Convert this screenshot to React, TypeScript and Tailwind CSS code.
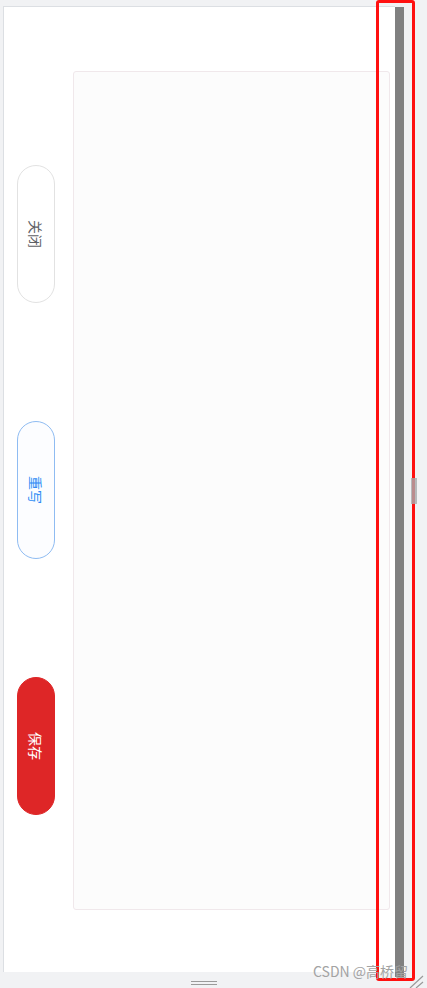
import React from "react";

const BUTTONS = [
  { label: "关闭", cls: "bg-white border border-[#e2e2e2] text-[#606266]" },
  { label: "重写", cls: "bg-[#fcfdff] border border-[#8fbcf2] text-[#2f8df5]" },
  { label: "保存", cls: "bg-[#de2627] border border-[#de2627] text-white" },
];

function SideButton({ label, cls }: { label: string; cls: string }) {
  return (
    <button
      className={
        "w-[38px] h-[138px] rounded-full flex items-center justify-center " + cls
      }
    >
      <span className="inline-block rotate-90 whitespace-nowrap text-[14px] leading-none">
        {label}
      </span>
    </button>
  );
}

export default function App() {
  return (
    <div className="relative w-[427px] h-[988px] bg-[#f1f2f4] overflow-hidden font-['Noto_Sans_CJK_SC','Noto_Sans',sans-serif]">
      <div className="flex pt-[6px] pl-[3px]">
        {/* dialog panel */}
        <div className="w-[392px] h-[966px] bg-white border-l border-t border-[#dcdfe3] flex pl-[13px]">
          <div className="w-[38px] flex flex-col gap-[118px] pt-[158px]">
            {BUTTONS.map((b) => (
              <SideButton key={b.label} {...b} />
            ))}
          </div>
          <div className="ml-[18px] mt-[64px] w-[317px] h-[839px] border border-[#f0e8eb] rounded-[3px] bg-[#fcfcfc]" />
        </div>
        {/* scroll bar */}
        <div className="w-[9px] h-[970px] mt-[1px] bg-[#808080]" />
      </div>

      {/* bottom drag handle */}
      <div className="absolute left-[191px] top-[981px] w-[26px] flex flex-col gap-[2px]">
        <div className="h-[1px] bg-[#9a9a9a]" />
        <div className="h-[1px] bg-[#9a9a9a]" />
      </div>

      {/* resize grip */}
      <svg className="absolute left-[406px] top-[975px]" width="18" height="13" viewBox="0 0 18 13">
        <path d="M4 13 L17 1 M10 13 L17 7" stroke="#9a9a9a" strokeWidth="1.2" fill="none" />
      </svg>

      {/* annotation box */}
      <div className="absolute left-[376px] top-0 w-[39px] h-[981px] border-[3px] border-[#ff1010] rounded-[3px]" />

      {/* right drag handle */}
      <div className="absolute left-[411px] top-[478px] w-[6px] h-[26px] bg-[#a9abae]/80" />

      {/* watermark */}
      <div className="absolute left-[313px] top-[962px] text-[14px] leading-[18px] text-[#a3a3a3] whitespace-nowrap">
        CSDN @高桥留
      </div>
    </div>
  );
}
